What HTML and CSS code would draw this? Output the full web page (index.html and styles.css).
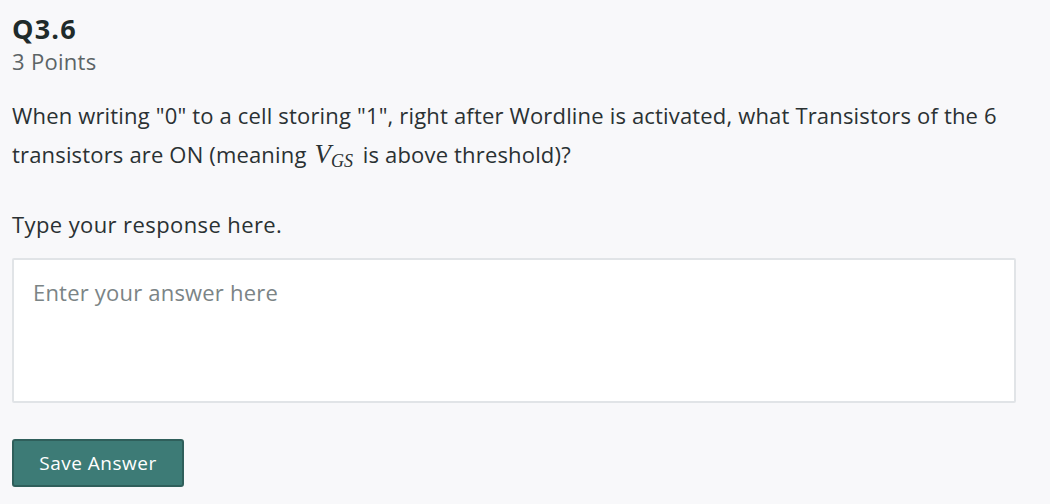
FILE: index.html
```html
<!DOCTYPE html>
<html>
<head>
<meta charset="utf-8">
<link rel="stylesheet" href="styles.css">
</head>
<body>
<main class="question">
  <h1 class="q-title">Q3.6</h1>
  <div class="q-points">3 Points</div>
  <p class="q-text">When writing "0" to a cell storing "1", right after Wordline is activated, what Transistors of the 6 transistors are ON (meaning <span class="math"><i>V</i><sub><i>GS</i></sub></span> is above threshold)?</p>
  <div class="q-prompt">Type your response here.</div>
  <textarea class="answer" placeholder="Enter your answer here"></textarea>
  <button class="save">Save Answer</button>
</main>
</body>
</html>
```
FILE: styles.css
```css
html, body {
  margin: 0;
  padding: 0;
  background: #f8f8fa;
}
body {
  font-family: "Open Sans", "Noto Sans", sans-serif;
  color: #2a3133;
}
.question {
  padding: 14px 34px 0 12px;
  display: flex;
  flex-direction: column;
  align-items: flex-start;
}
.q-title {
  margin: 0;
  font-size: 27px;
  line-height: 30px;
  font-weight: 700;
  letter-spacing: 1.2px;
  color: #1f2b2b;
}
.q-points {
  font-size: 22px;
  line-height: 26px;
  letter-spacing: 0.3px;
  color: #5c6466;
  margin-top: 4px;
}
.q-text {
  margin: 22px 0 0;
  font-size: 22px;
  line-height: 39px;
  letter-spacing: 0.17px;
}
.math {
  font-family: "Liberation Serif", "DejaVu Serif", serif;
  font-size: 27px;
  line-height: 0;
  letter-spacing: 0;
  margin: 0 4px 0 2px;
}
.math sub {
  font-size: 18px;
  vertical-align: -4px;
}
.q-prompt {
  margin-top: 37px;
  font-size: 22px;
  line-height: 26px;
  letter-spacing: 0.4px;
}
.answer {
  box-sizing: border-box;
  margin-top: 21px;
  width: 1004px;
  height: 145px;
  border: 2px solid #e1e4e7;
  border-radius: 2px;
  background: #ffffff;
  padding: 19px 19px;
  font-family: "Open Sans", "Noto Sans", sans-serif;
  font-size: 22px;
  line-height: 26px;
  letter-spacing: 0.2px;
  resize: none;
  outline: none;
}
.answer::placeholder {
  color: #7b8486;
}
.save {
  margin-top: 36px;
  width: 172px;
  height: 48px;
  background: #3d7b76;
  border: 2px solid #2f5f5b;
  border-radius: 3px;
  color: #ffffff;
  font-family: "Open Sans", "Noto Sans", sans-serif;
  font-size: 19px;
  letter-spacing: 0.5px;
  padding: 0;
}
```
